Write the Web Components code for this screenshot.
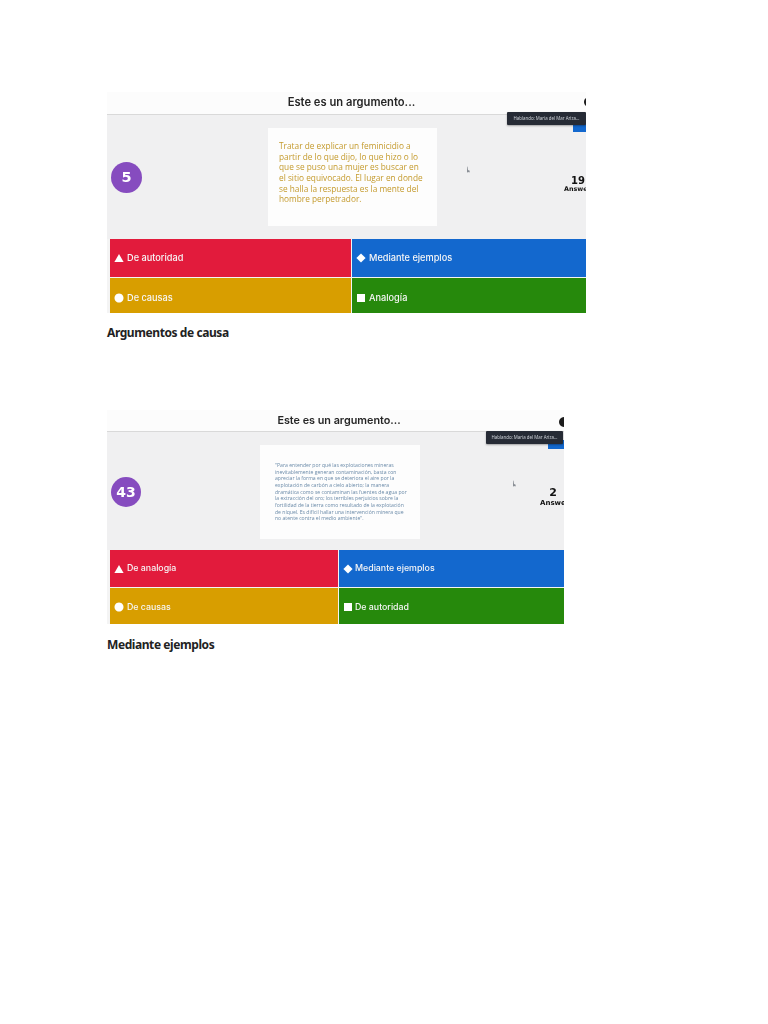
<!DOCTYPE html>
<html lang="es"><head><meta charset="utf-8"><title>Argumentos</title>
<style>
html,body{margin:0;background:#fff}
body{padding:92px 0 0 107px;width:661px;height:932px;box-sizing:border-box;overflow:hidden;font-family:"Noto Sans",sans-serif}
</style></head><body>
<template id="slide-t"><style>
:host{display:block;width:var(--w);position:relative;overflow:hidden;background:#f0f0f1;color:#222}
.wrap{filter:blur(.35px)}
header{height:var(--hh);box-sizing:border-box;background:#fcfcfc;border-bottom:1px solid #d9d9d9;display:flex;align-items:center;justify-content:center;font:600 var(--tfs)/1 Inter,sans-serif;color:#262626;padding:var(--tt,0) 0 0 var(--tpad)}
.body{height:var(--bh);display:grid;grid-template-columns:var(--c1) var(--c2) 1fr;box-sizing:border-box;padding-left:4px}
.left{display:flex;align-items:center;padding-top:var(--ct)}
.num{width:var(--d);height:var(--d);border-radius:50%;background:#864cbf;color:#fff;display:flex;align-items:center;justify-content:center;font:700 var(--nfs)/1 "DejaVu Sans",sans-serif}
.mid{display:flex;align-items:flex-start;padding-top:13px}
.card{width:100%;height:var(--ch);background:#fdfdfd;box-sizing:border-box;display:flex;align-items:center;padding:var(--cp)}
.right{display:flex;align-items:center;padding:var(--rp);white-space:nowrap}
.stat{display:flex;flex-direction:column;align-items:flex-start;width:var(--sw)}
.count{font:700 var(--cfs)/1.1 "DejaVu Sans",sans-serif;color:#111;width:100%;text-align:center}
.ans{font:700 var(--anfs)/1.2 "DejaVu Sans",sans-serif;color:#111}
.answers{display:grid;grid-template-columns:var(--a1) 1fr;grid-template-rows:var(--r1) var(--r2);gap:1px;padding-left:3px;background:#f4f4f4}
</style><div class="wrap"><header><slot name="title"></slot></header>
<div class="body"><div class="left"><div class="num"><slot name="num"></slot></div></div><div class="mid"><div class="card"><slot name="q"></slot></div></div><div class="right"><div class="stat"><span class="count"><slot name="count"></slot></span><span class="ans">Answers</span></div></div></div>
<div class="answers"><slot></slot></div></div><slot name="over"></slot></template>

<template id="ans-t"><style>
:host{display:flex;align-items:center;gap:var(--ag,3px);padding:var(--pt,0) 0 0 4px;color:#f6f6f6;font:500 var(--afs,9.2px)/1 Inter,sans-serif;min-width:0;white-space:nowrap}
:host([c=r]){background:#e21b3c}:host([c=b]){background:#1368ce}:host([c=y]){background:#d89e00}:host([c=g]){background:#26890c}
svg{width:10px;height:10px;flex:none;fill:#fff}
</style><svg viewBox="0 0 10 10"><path id="p"/></svg><slot></slot></template>

<template id="tip-t"><style>
:host{display:block;position:absolute;background:#262b35;color:#cfd3d9;font:400 4.4px/13px "Noto Sans",sans-serif;text-align:center;border-radius:1px;box-shadow:0 1px 2px #0005;white-space:nowrap;z-index:2;filter:blur(.25px)}
</style><slot></slot></template>

<template id="cap-t"><style>
:host{display:block;font:700 12px/16px "Noto Sans",sans-serif;color:#222;letter-spacing:-.42px}
</style><slot></slot></template>

<template id="mark-t"><style>
:host{display:block;position:absolute}
svg{display:block;width:100%;height:100%}
</style><svg viewBox="0 0 10 10"><path id="p"/></svg></template>

<doc-stack>
<quiz-slide style="--w:479px;--hh:23px;--bh:124px;--tfs:11.2px;--tpad:10px;--c1:157px;--c2:169px;--ct:0px;--d:31px;--nfs:14.5px;--ch:98px;--cp:0 11px 8px;--cfs:10px;--anfs:6.4px;--sw:28px;--rp:14px 0 0 127px;--a1:241px;--r1:38px;--r2:35px">
<span slot="title">Este es un argumento...</span><span slot="num">5</span>
<span slot="q" style="font:400 8.3px/10.6px 'Open Sans',sans-serif;color:#c49a2c;display:block">Tratar de explicar un feminicidio a partir de lo que dijo, lo que hizo o lo que se puso una mujer es buscar en el sitio equivocado. El lugar en donde se halla la respuesta es la mente del hombre perpetrador.</span>
<span slot="count">19</span>
<quiz-answer c="r" s="t">De autoridad</quiz-answer><quiz-answer c="b" s="d">Mediante ejemplos</quiz-answer>
<quiz-answer c="y" s="c" style="--pt:4px">De causas</quiz-answer><quiz-answer c="g" s="q" style="--pt:4px">Analogía</quiz-answer>
<slide-mark slot="over" k="btn" style="right:0;top:30px;width:13px;height:10px"></slide-mark>
<speaker-tip slot="over" style="right:0;top:20px;width:79px">Hablando: Maria del Mar Ariza...</speaker-tip>
<slide-mark slot="over" k="dot" style="right:-8px;top:5px;width:10px;height:10px"></slide-mark>
<slide-mark slot="over" k="cur" style="left:359px;top:74px;width:5px;height:8px"></slide-mark>
</quiz-slide>
<doc-caption style="margin-top:12px">Argumentos de causa</doc-caption>
</doc-stack>
<doc-stack style="margin-top:69px">
<quiz-slide style="--w:457px;--hh:22px;--bh:118px;--tfs:10.8px;--tpad:7px;--tt:1px;--c1:149px;--c2:160px;--ct:2px;--d:30px;--nfs:14px;--ch:94px;--cp:0 10px 0 15px;--cfs:11px;--anfs:7px;--sw:26px;--rp:13px 0 0 120px;--a1:228px;--r1:37px;--r2:36px;--afs:8.8px;--ag:2px">
<span slot="title">Este es un argumento...</span><span slot="num">43</span>
<span slot="q" style="font:400 5.1px/6.7px 'Open Sans',sans-serif;color:#6a8aa8;display:block">"Para entender por qué las explotaciones mineras inevitablemente generan contaminación, basta con apreciar la forma en que se deteriora el aire por la explotación de carbón a cielo abierto; la manera dramática como se contaminan las fuentes de agua por la extracción del oro; los terribles perjuicios sobre la fortilidad de la tierra como resultado de la explotación de níquel. Es difícil hallar una intervención minera que no atente contra el medio ambiente".</span>
<span slot="count">2</span>
<quiz-answer c="r" s="t" style="--ag:3px">De analogía</quiz-answer><quiz-answer c="b" s="d">Mediante ejemplos</quiz-answer>
<quiz-answer c="y" s="c" style="--pt:2px;--ag:3px">De causas</quiz-answer><quiz-answer c="g" s="q" style="--pt:2px">De autoridad</quiz-answer>
<slide-mark slot="over" k="btn" style="right:0;top:30px;width:16px;height:9px"></slide-mark>
<speaker-tip slot="over" style="right:1px;top:21px;width:77px">Hablando: Maria del Mar Ariza...</speaker-tip>
<slide-mark slot="over" k="dot" style="right:-5px;top:7px;width:10px;height:10px"></slide-mark>
<slide-mark slot="over" k="cur" style="left:405px;top:70px;width:5px;height:8px"></slide-mark>
</quiz-slide>
<doc-caption style="margin-top:13px">Mediante ejemplos</doc-caption>
</doc-stack>
<script>
const sr=(el,id)=>{const r=el.attachShadow({mode:"open"});r.append(document.getElementById(id).content.cloneNode(true));return r};
customElements.define("doc-stack",class extends HTMLElement{constructor(){super();const r=this.attachShadow({mode:"open"});r.innerHTML="<style>:host{display:block}</style><slot></slot>"}});
customElements.define("quiz-slide",class extends HTMLElement{constructor(){super();sr(this,"slide-t")}});
customElements.define("speaker-tip",class extends HTMLElement{constructor(){super();sr(this,"tip-t")}});
customElements.define("doc-caption",class extends HTMLElement{constructor(){super();sr(this,"cap-t")}});
const S={t:"M5 1 L9.6 9 H.4Z",d:"M5 .4 L9.6 5 5 9.6 .4 5Z",c:"M5 .5a4.5 4.5 0 1 0 .01 0Z",q:"M1 1H9V9H1Z"};
customElements.define("quiz-answer",class extends HTMLElement{constructor(){super();sr(this,"ans-t")}
connectedCallback(){this.shadowRoot.getElementById("p").setAttribute("d",S[this.getAttribute("s")])}});
const M={btn:["M0 0H10V10H0Z","#1368ce"],dot:["M5 0a5 5 0 1 0 .01 0Z","#1c1c1c"],cur:["M2 0.5V8.5L4 7.5 7 8 7.5 6 4 5 3 1Z","#8a8f96"]};
customElements.define("slide-mark",class extends HTMLElement{constructor(){super();sr(this,"mark-t")}
connectedCallback(){const [d,f]=M[this.getAttribute("k")],p=this.shadowRoot.getElementById("p"),v=this.shadowRoot.querySelector("svg");p.setAttribute("d",d);p.setAttribute("fill",f);v.setAttribute("preserveAspectRatio","none")}});
</script>
</body></html>
